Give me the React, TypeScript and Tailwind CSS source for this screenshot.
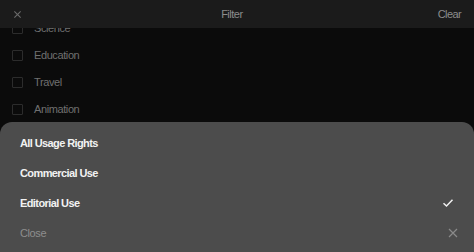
import React from "react";

const rows = ["Science", "Education", "Travel", "Animation"];
const opts = ["All Usage Rights", "Commercial Use", "Editorial Use"];

export default function App() {
  return (
    <div
      className="w-[474px] h-[252px] overflow-hidden bg-[#0b0b0b] flex flex-col"
      style={{ fontFamily: '"Liberation Sans", Arial, sans-serif' }}
    >
      <div className="h-[28px] shrink-0 bg-[#1b1b1b] flex items-center px-[12px] text-[11px] text-[#8a8a8a] relative z-10">
        <svg width="9" height="9" viewBox="0 0 10 10" className="ml-[1px]">
          <path d="M1.5 1.5L8.5 8.5M8.5 1.5L1.5 8.5" stroke="#6a6a6a" strokeWidth="1.2" />
        </svg>
        <div className="flex-1 text-center text-[#8c8c8c] tracking-[-0.5px] pl-[4px]">Filter</div>
        <div className="text-[#8c8c8c] mr-[1px] tracking-[-0.6px]">Clear</div>
      </div>
      <div className="h-[94px] shrink-0 overflow-hidden">
        <div className="mt-[-13px] flex flex-col">
          {rows.map((r) => (
            <div key={r} className="h-[27px] flex items-center pl-[12px] gap-[11px]">
              <div className="w-[11px] h-[11px] border border-[#2c2c2c] rounded-[1px]" />
              <span className="text-[11px] text-[#707070] tracking-[-0.4px]">{r}</span>
            </div>
          ))}
        </div>
      </div>
      <div className="flex-1 bg-[#4c4c4c] rounded-t-[12px] pt-[6px] flex flex-col">
        {opts.map((o, i) => (
          <div key={o} className="h-[30px] flex items-center px-[20px] justify-between">
            <span className="text-[11px] text-[#f2f2f2] font-bold tracking-[-0.6px]">{o}</span>
            {i === 2 && (
              <svg width="12" height="10" viewBox="0 0 12 10" className="mr-[0px]">
                <path d="M1.5 5.2L4.5 8L10.5 1.8" stroke="#f0f0f0" strokeWidth="1.5" fill="none" />
              </svg>
            )}
          </div>
        ))}
        <div className="h-[30px] flex items-center px-[20px] justify-between">
          <span className="text-[11px] text-[#8e8e8e] tracking-[-0.4px]">Close</span>
          <svg width="10" height="10" viewBox="0 0 10 10" className="mr-[-4px]">
            <path d="M1 1L9 9M9 1L1 9" stroke="#8a8a8a" strokeWidth="1.2" />
          </svg>
        </div>
      </div>
    </div>
  );
}
